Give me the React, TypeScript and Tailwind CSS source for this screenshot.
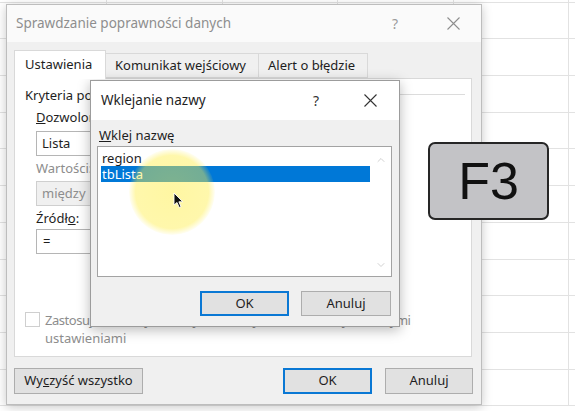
import React from 'react';
import { ChevronUp, ChevronDown } from 'lucide-react';

const rows = Array.from({ length: 12 });
const cols = ['w-[107px]', 'w-[115.5px]', 'w-[115.5px]', 'w-[115.5px]', 'w-[115.5px]', 'w-[115.5px]'];

const CloseIcon = ({ className }: { className?: string }) => (
  <svg width="13" height="13" viewBox="0 0 13 13" className={className}>
    <path d="M0.5 0.5 L12.5 12.5 M12.5 0.5 L0.5 12.5" stroke="currentColor" strokeWidth="1.1" fill="none" />
  </svg>
);

const Cursor = () => (
  <svg width="11" height="17" viewBox="0 0 11 17" className="absolute left-[173px] top-[192px]">
    <path d="M1 1 L1 13 L4 10.5 L6.2 15.5 L8 14.7 L5.9 9.8 L9.8 9.8 Z" fill="#111" stroke="#fff" strokeWidth="0.9" />
  </svg>
);

const Button = ({ label, primary, className }: { label: React.ReactNode; primary?: boolean; className: string }) => (
  <div
    className={
      'flex items-center justify-center bg-[#e1e1e1] text-[13px] text-[#1e1e1e] ' +
      (primary ? 'border-2 border-[#0a78d4] ' : 'border border-[#adadad] ') +
      className
    }
  >
    {label}
  </div>
);

export default function App() {
  return (
    <div className="relative w-[575px] h-[411px] overflow-hidden bg-white font-['Noto_Sans','Open_Sans',sans-serif] text-[#1e1e1e]">
      {/* arkusz w tle */}
      <div className="absolute left-0 top-[-34px] flex flex-col">
        {rows.map((_, r) => (
          <div key={r} className="flex h-[36.7px]">
            {cols.map((w, c) => (
              <div key={c} className={w + ' h-full border-r border-b border-[#e2e2e2]'} />
            ))}
          </div>
        ))}
      </div>

      {/* Sprawdzanie poprawności danych */}
      <div className="absolute left-[6px] top-[4px] w-[476px] h-[401px] flex flex-col bg-[#f0f0f0] border border-[#bdbdbd] shadow-[0_2px_10px_rgba(0,0,0,0.22)]">
        <div className="h-[37px] shrink-0 bg-[#fafafa] flex items-center pl-[9px]">
          <span className="text-[13.5px] text-[#8e8e8e]">Sprawdzanie poprawności danych</span>
          <span className="ml-auto text-[14px] text-[#9a9a9a]">?</span>
          <CloseIcon className="ml-[49px] mr-[21px] text-[#8e8e8e]" />
        </div>

        <div className="flex items-end mt-[8px] ml-[7px] h-[28px]">
          <div className="relative z-10 h-[29px] mb-[-1px] w-[92px] bg-white border border-b-0 border-[#d9d9d9] flex items-center pl-[10px] text-[13px]">
            Ustawienia
          </div>
          <div className="h-[25px] w-[153px] border border-l-0 border-[#d9d9d9] flex items-center pl-[9px] text-[13px]">
            Komunikat wejściowy
          </div>
          <div className="h-[25px] w-[109px] border border-l-0 border-[#d9d9d9] flex items-center pl-[9px] text-[13px]">
            Alert o błędzie
          </div>
        </div>

        <div className="ml-[7px] w-[458px] h-[279px] shrink-0 bg-white border border-[#d9d9d9] flex flex-col text-[13px]">
          <div className="mt-[8px] ml-[10px] mr-[6px] h-[18px] flex items-center gap-[6px]">
            <span>Kryteria poprawności</span>
            <div className="flex-1 h-px bg-[#dcdcdc] -mt-[4px]" />
          </div>
          <div className="mt-[4px] ml-[21px] h-[18px] flex items-center">
            <span><span className="underline">D</span>ozwolone:</span>
          </div>
          <div className="mt-[4px] ml-[21px] w-[170px] h-[25px] border border-[#b5b5b5] flex items-center pl-[5px]">Lista</div>
          <div className="mt-[4px] ml-[21px] h-[18px] flex items-center text-[#8d8d8d]">Wartości:</div>
          <div className="mt-[3px] ml-[21px] w-[170px] h-[25px] border border-[#cfcfcf] bg-[#f0f0f0] flex items-center pl-[5px] text-[#8d8d8d]">między</div>
          <div className="mt-[4px] ml-[21px] h-[18px] flex items-center">
            <span>Źródł<span className="underline">o</span>:</span>
          </div>
          <div className="mt-[1px] ml-[21px] w-[300px] h-[25px] border border-[#b5b5b5] flex items-center pl-[6px]">=</div>
          <div className="mt-[57px] ml-[10px] flex items-start gap-[5px] text-[#8d8d8d] leading-[18px]">
            <div className="mt-[1px] w-[15px] h-[15px] border border-[#cfcfcf] bg-white shrink-0" />
            <div>
              <div className="whitespace-nowrap tracking-[-0.45px]">Zastosuj te zmiany do wszystkich innych komórek z tymi samymi</div>
              <div>ustawieniami</div>
            </div>
          </div>
        </div>

        <div className="mt-[11px] ml-[7px] mr-[8px] flex items-center">
          <Button className="w-[129px] h-[26px]" label={<span>Wy<span className="underline">c</span>zyść wszystko</span>} />
          <Button primary className="ml-auto w-[89px] h-[26px]" label="OK" />
          <Button className="ml-[13px] w-[88px] h-[26px]" label="Anuluj" />
        </div>
      </div>

      {/* Wklejanie nazwy */}
      <div className="absolute left-[90px] top-[80px] w-[310px] h-[247px] flex flex-col bg-[#f0f0f0] border border-[#9c9c9c] shadow-[0_3px_12px_rgba(0,0,0,0.28)]">
        <div className="h-[39px] shrink-0 bg-white flex items-center pl-[10px]">
          <span className="text-[13.5px] text-[#1e1e1e]">Wklejanie nazwy</span>
          <span className="ml-auto text-[14px] text-[#333]">?</span>
          <CloseIcon className="ml-[45px] mr-[22px] text-[#333]" />
        </div>
        <div className="mt-[7px] ml-[8px] h-[18px] flex items-center text-[13px]">
          <span><span className="underline">W</span>klej nazwę</span>
        </div>
        <div className="mt-[1px] ml-[6px] w-[295px] h-[131px] border border-[#a3a3a3] bg-white flex">
          <div className="flex-1 pt-[3px] pl-[3px] text-[13px] leading-[16px]">
            <div className="h-[16px] pl-[1px]">region</div>
            <div className="h-[16px] pl-[1px] bg-[#0078d7] text-white">tbLista</div>
          </div>
          <div className="w-[21px] flex flex-col items-center justify-between pt-[7px] pb-[5px] text-[#c2c2c2]">
            <ChevronUp size={12} strokeWidth={1.5} />
            <ChevronDown size={12} strokeWidth={1.5} />
          </div>
        </div>
        <div className="mt-[14px] mr-[8px] flex justify-end gap-[12px]">
          <Button primary className="w-[89px] h-[25px]" label="OK" />
          <Button className="w-[90px] h-[25px]" label="Anuluj" />
        </div>
      </div>

      {/* podświetlenie kursora */}
      <div className="absolute left-[129px] top-[149px] w-[86px] h-[86px] rounded-full bg-[radial-gradient(circle,rgba(255,238,70,0.5)_0%,rgba(255,238,70,0.45)_60%,rgba(255,238,70,0)_72%)]" />
      <Cursor />

      {/* klawisz F3 */}
      <div className="absolute left-[428px] top-[142px] w-[121px] h-[78px] rounded-[7px] border-2 border-[#262626] bg-[#c3c3c6] flex items-center justify-center font-['Liberation_Sans',Arial,sans-serif] text-[52px] leading-none text-[#111]">
        F3
      </div>
    </div>
  );
}
